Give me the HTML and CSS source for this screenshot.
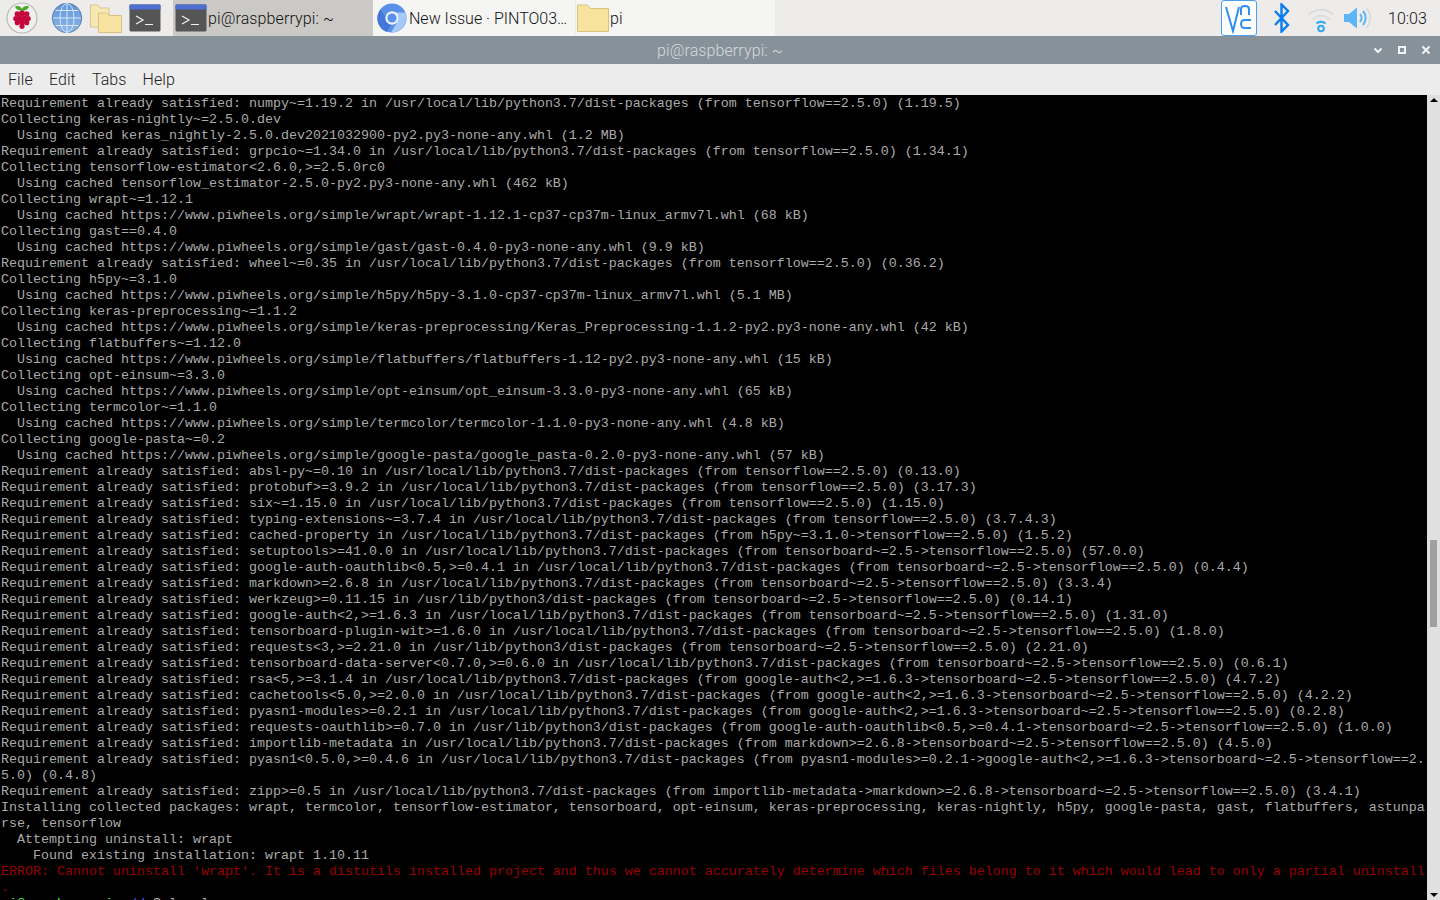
FILE: index.html
```
<!DOCTYPE html>
<html lang="en">
<head>
<meta charset="utf-8">
<title>pi@raspberrypi: ~</title>
<link rel="stylesheet" href="styles.css">
</head>
<body>
<div class="panel">
  <div class="launchers">
    <svg class="ico-menu" width="32" height="32" viewBox="0 0 32 32"><circle cx="16" cy="16" r="15" fill="#f0f0ee" stroke="#b9b9b7" stroke-width="1.2"/><path d="M15.500 9c-2-.3-5-1-6.500-4.500 3-.8 5.500-.5 7 2.500 1.500-3 4-3.300 7-2.500-1.500 3.500-4.500 4.200-6.500 4.500z" fill="#4ea72c"/><g fill="#c4083d" transform="translate(0 -1)"><circle cx="16" cy="12.500" r="3"/><circle cx="11.300" cy="13" r="2.700"/><circle cx="20.700" cy="13" r="2.700"/><circle cx="9.800" cy="17.500" r="2.600"/><circle cx="22.200" cy="17.500" r="2.600"/><circle cx="13.600" cy="17.300" r="2.800"/><circle cx="18.400" cy="17.300" r="2.800"/><circle cx="11.300" cy="21.700" r="2.600"/><circle cx="20.700" cy="21.700" r="2.600"/><circle cx="16" cy="21.500" r="2.800"/><circle cx="16" cy="25.300" r="2.600"/></g></svg>
    <svg class="ico-globe" width="32" height="32" viewBox="0 0 32 32"><defs><linearGradient id="gl" x1="0" y1="0" x2="0" y2="1"><stop offset="0" stop-color="#5f95dc"/><stop offset="1" stop-color="#8db6e8"/></linearGradient></defs><circle cx="16" cy="16" r="14.700" fill="url(#gl)" stroke="#5d7fa8" stroke-width="1"/><g fill="none" stroke="#d6e6f8" stroke-width="1"><ellipse cx="16" cy="16" rx="7" ry="14.500"/><path d="M16 1.500v29M2 16h28M4.500 8.500h23M4.500 23.500h23"/></g></svg>
    <svg class="ico-files" width="32" height="30" viewBox="0 0 32 30"><path d="M.500 2h7l2.500 3h9v19H.500z" fill="#f7e7b2" stroke="#d8c58c"/><path d="M8.500 10h8l2.500 2.500h12.500v17H8.500z" fill="#f8e4a0" stroke="#d9c27f"/></svg>
    <svg class="ico-term" width="32" height="28" viewBox="0 0 32 28"><rect x=".500" y=".500" width="31" height="27" rx="1.500" fill="#555"/><path d="M1 .500h30a.500.500 0 0 1 .500.500v4.500H.500V1a.500.500 0 0 1 .500-.500z" fill="#4e6fd2"/><path d="M7 12l7 4-7 4M16 20.500h8" fill="none" stroke="#f2f2f2" stroke-width="1.200"/></svg>
  </div>
  <div class="tasks">
    <div class="task task-active">
      <svg class="ico-term" width="32" height="28" viewBox="0 0 32 28"><rect x=".500" y=".500" width="31" height="27" rx="1.500" fill="#555"/><path d="M1 .500h30a.500.500 0 0 1 .500.500v4.500H.500V1a.500.500 0 0 1 .500-.500z" fill="#4e6fd2"/><path d="M7 12l7 4-7 4M16 20.500h8" fill="none" stroke="#f2f2f2" stroke-width="1.200"/></svg>
      <span>pi@raspberrypi: ~</span>
    </div>
    <div class="task task-chrome">
      <svg width="30" height="30" viewBox="0 0 30 30"><circle cx="15" cy="15" r="14.500" fill="#5b90e8"/><path d="M15 9.500h13a14.500 14.500 0 0 1-14 20l6-10a6 6 0 0 0-5-10z" fill="#a8c9f8"/><path d="M3.500 6.500L10 17a6 6 0 0 0 5 3.500L9.500 29A14.500 14.500 0 0 1 3.500 6.500z" fill="#4478d8"/><circle cx="15" cy="15" r="6.700" fill="#eef3fb"/><circle cx="15" cy="15" r="4.600" fill="#5b90e8"/></svg>
      <span>New Issue · PINTO03…</span>
    </div>
    <div class="task task-folder">
      <svg width="32" height="28" viewBox="0 0 32 28"><path d="M.500 1h10l3 3.500h18v23H.500z" fill="#f8e39c" stroke="#d9c27f"/></svg>
      <span>pi</span>
    </div>
  </div>
  <div class="tray">
    <div class="tray-vnc"><svg width="32" height="32" viewBox="0 0 32 32"><path d="M3 5l7 24 6-24" fill="none" stroke="#2f8ff0" stroke-width="2"/><path d="M18 13V7c0-2 1.500-3 4-3s4 1 4 3v6M28 18h-6c-2.500 0-4 1.500-4 4s1.500 4 4 4h6" fill="none" stroke="#2f8ff0" stroke-width="2"/></svg></div>
    <svg class="tray-bt" width="18" height="30" viewBox="0 0 18 30"><path d="M2 8l13 14-6.500 6.500V1.500L15 8 2 22" fill="none" stroke="#0a7df0" stroke-width="2.400"/></svg>
    <svg class="tray-wifi" width="28" height="30" viewBox="0 0 28 30"><path d="M1.500 12C8 5 20 5 26.500 12M5.500 16.500c5-5 12-5 17 0" fill="none" stroke="#dcdcdc" stroke-width="2"/><path d="M9.500 20.500c2.500-2.500 6.500-2.500 9 0" fill="none" stroke="#33a6f2" stroke-width="2"/><circle cx="14" cy="25.500" r="2.800" fill="none" stroke="#33a6f2" stroke-width="2"/></svg>
    <svg class="tray-vol" width="28" height="30" viewBox="0 0 28 30"><path d="M1 11h5l8-6.500v21L6 19H1z" fill="#5cb5f5"/><path d="M17 11c2 2.500 2 5.500 0 8" fill="none" stroke="#5cb5f5" stroke-width="2"/><path d="M20 8c3.500 4 3.500 10 0 14" fill="none" stroke="#5cb5f5" stroke-width="2"/><path d="M23.500 5c5 6 5 14 0 20" fill="none" stroke="#dcdcdc" stroke-width="2"/></svg>
    <div class="clock">10:03</div>
  </div>
</div>
<div class="titlebar">
  <div class="title">pi@raspberrypi: ~</div>
  <div class="win-btns">
    <svg width="10" height="10" viewBox="0 0 10 10"><path d="M1.500 3.500L5 7l3.500-3.500" fill="none" stroke="#f4f5f6" stroke-width="2"/></svg>
    <svg width="10" height="10" viewBox="0 0 10 10"><rect x="2" y="2" width="6" height="6" fill="none" stroke="#f4f5f6" stroke-width="2"/></svg>
    <svg width="10" height="10" viewBox="0 0 10 10"><path d="M1.500 1.500l7 7M8.500 1.500l-7 7" fill="none" stroke="#f4f5f6" stroke-width="2"/></svg>
  </div>
</div>
<div class="menubar"><span>File</span><span>Edit</span><span>Tabs</span><span>Help</span></div>
<div class="window-body">
<pre class="terminal">Requirement already satisfied: numpy~=1.19.2 in /usr/local/lib/python3.7/dist-packages (from tensorflow==2.5.0) (1.19.5)
Collecting keras-nightly~=2.5.0.dev
  Using cached keras_nightly-2.5.0.dev2021032900-py2.py3-none-any.whl (1.2 MB)
Requirement already satisfied: grpcio~=1.34.0 in /usr/local/lib/python3.7/dist-packages (from tensorflow==2.5.0) (1.34.1)
Collecting tensorflow-estimator&lt;2.6.0,&gt;=2.5.0rc0
  Using cached tensorflow_estimator-2.5.0-py2.py3-none-any.whl (462 kB)
Collecting wrapt~=1.12.1
  Using cached https://www.piwheels.org/simple/wrapt/wrapt-1.12.1-cp37-cp37m-linux_armv7l.whl (68 kB)
Collecting gast==0.4.0
  Using cached https://www.piwheels.org/simple/gast/gast-0.4.0-py3-none-any.whl (9.9 kB)
Requirement already satisfied: wheel~=0.35 in /usr/local/lib/python3.7/dist-packages (from tensorflow==2.5.0) (0.36.2)
Collecting h5py~=3.1.0
  Using cached https://www.piwheels.org/simple/h5py/h5py-3.1.0-cp37-cp37m-linux_armv7l.whl (5.1 MB)
Collecting keras-preprocessing~=1.1.2
  Using cached https://www.piwheels.org/simple/keras-preprocessing/Keras_Preprocessing-1.1.2-py2.py3-none-any.whl (42 kB)
Collecting flatbuffers~=1.12.0
  Using cached https://www.piwheels.org/simple/flatbuffers/flatbuffers-1.12-py2.py3-none-any.whl (15 kB)
Collecting opt-einsum~=3.3.0
  Using cached https://www.piwheels.org/simple/opt-einsum/opt_einsum-3.3.0-py3-none-any.whl (65 kB)
Collecting termcolor~=1.1.0
  Using cached https://www.piwheels.org/simple/termcolor/termcolor-1.1.0-py3-none-any.whl (4.8 kB)
Collecting google-pasta~=0.2
  Using cached https://www.piwheels.org/simple/google-pasta/google_pasta-0.2.0-py3-none-any.whl (57 kB)
Requirement already satisfied: absl-py~=0.10 in /usr/local/lib/python3.7/dist-packages (from tensorflow==2.5.0) (0.13.0)
Requirement already satisfied: protobuf&gt;=3.9.2 in /usr/local/lib/python3.7/dist-packages (from tensorflow==2.5.0) (3.17.3)
Requirement already satisfied: six~=1.15.0 in /usr/local/lib/python3.7/dist-packages (from tensorflow==2.5.0) (1.15.0)
Requirement already satisfied: typing-extensions~=3.7.4 in /usr/local/lib/python3.7/dist-packages (from tensorflow==2.5.0) (3.7.4.3)
Requirement already satisfied: cached-property in /usr/local/lib/python3.7/dist-packages (from h5py~=3.1.0-&gt;tensorflow==2.5.0) (1.5.2)
Requirement already satisfied: setuptools&gt;=41.0.0 in /usr/local/lib/python3.7/dist-packages (from tensorboard~=2.5-&gt;tensorflow==2.5.0) (57.0.0)
Requirement already satisfied: google-auth-oauthlib&lt;0.5,&gt;=0.4.1 in /usr/local/lib/python3.7/dist-packages (from tensorboard~=2.5-&gt;tensorflow==2.5.0) (0.4.4)
Requirement already satisfied: markdown&gt;=2.6.8 in /usr/local/lib/python3.7/dist-packages (from tensorboard~=2.5-&gt;tensorflow==2.5.0) (3.3.4)
Requirement already satisfied: werkzeug&gt;=0.11.15 in /usr/lib/python3/dist-packages (from tensorboard~=2.5-&gt;tensorflow==2.5.0) (0.14.1)
Requirement already satisfied: google-auth&lt;2,&gt;=1.6.3 in /usr/local/lib/python3.7/dist-packages (from tensorboard~=2.5-&gt;tensorflow==2.5.0) (1.31.0)
Requirement already satisfied: tensorboard-plugin-wit&gt;=1.6.0 in /usr/local/lib/python3.7/dist-packages (from tensorboard~=2.5-&gt;tensorflow==2.5.0) (1.8.0)
Requirement already satisfied: requests&lt;3,&gt;=2.21.0 in /usr/lib/python3/dist-packages (from tensorboard~=2.5-&gt;tensorflow==2.5.0) (2.21.0)
Requirement already satisfied: tensorboard-data-server&lt;0.7.0,&gt;=0.6.0 in /usr/local/lib/python3.7/dist-packages (from tensorboard~=2.5-&gt;tensorflow==2.5.0) (0.6.1)
Requirement already satisfied: rsa&lt;5,&gt;=3.1.4 in /usr/local/lib/python3.7/dist-packages (from google-auth&lt;2,&gt;=1.6.3-&gt;tensorboard~=2.5-&gt;tensorflow==2.5.0) (4.7.2)
Requirement already satisfied: cachetools&lt;5.0,&gt;=2.0.0 in /usr/local/lib/python3.7/dist-packages (from google-auth&lt;2,&gt;=1.6.3-&gt;tensorboard~=2.5-&gt;tensorflow==2.5.0) (4.2.2)
Requirement already satisfied: pyasn1-modules&gt;=0.2.1 in /usr/local/lib/python3.7/dist-packages (from google-auth&lt;2,&gt;=1.6.3-&gt;tensorboard~=2.5-&gt;tensorflow==2.5.0) (0.2.8)
Requirement already satisfied: requests-oauthlib&gt;=0.7.0 in /usr/lib/python3/dist-packages (from google-auth-oauthlib&lt;0.5,&gt;=0.4.1-&gt;tensorboard~=2.5-&gt;tensorflow==2.5.0) (1.0.0)
Requirement already satisfied: importlib-metadata in /usr/local/lib/python3.7/dist-packages (from markdown&gt;=2.6.8-&gt;tensorboard~=2.5-&gt;tensorflow==2.5.0) (4.5.0)
Requirement already satisfied: pyasn1&lt;0.5.0,&gt;=0.4.6 in /usr/local/lib/python3.7/dist-packages (from pyasn1-modules&gt;=0.2.1-&gt;google-auth&lt;2,&gt;=1.6.3-&gt;tensorboard~=2.5-&gt;tensorflow==2.
5.0) (0.4.8)
Requirement already satisfied: zipp&gt;=0.5 in /usr/local/lib/python3.7/dist-packages (from importlib-metadata-&gt;markdown&gt;=2.6.8-&gt;tensorboard~=2.5-&gt;tensorflow==2.5.0) (3.4.1)
Installing collected packages: wrapt, termcolor, tensorflow-estimator, tensorboard, opt-einsum, keras-preprocessing, keras-nightly, h5py, google-pasta, gast, flatbuffers, astunpa
rse, tensorflow
  Attempting uninstall: wrapt
    Found existing installation: wrapt 1.10.11
<span class="t-red">ERROR: Cannot uninstall 'wrapt'. It is a distutils installed project and thus we cannot accurately determine which files belong to it which would lead to only a partial uninstall
.</span>
<span class="t-green">pi@raspberrypi</span>:<span class="t-blue">~/d</span> $ ls -l</pre>
<div class="scrollbar">
  <div class="sb-up"></div>
  <div class="sb-track"><div class="sb-thumb"></div></div>
  <div class="sb-down"></div>
</div>
</div>
</body>
</html>
```

FILE: styles.css
```
* { box-sizing: border-box; }
html, body { margin: 0; padding: 0; }
body {
  width: 1440px;
  height: 900px;
  overflow: hidden;
  display: flex;
  flex-direction: column;
  font-family: Roboto, "Liberation Sans", sans-serif;
  font-weight: 300;
  background: #000;
}
svg { display: block; flex: none; }
.panel {
  height: 36px;
  flex: none;
  display: flex;
  align-items: center;
  background: #edecea;
  color: #111;
  font-size: 16px;
}
.launchers {
  display: flex;
  align-items: center;
  padding-left: 6px;
  width: 173px;
  flex: none;
}
.ico-globe { margin-left: 13px; }
.ico-files { margin-left: 7px; }
.ico-term { margin-left: 7px; }
.tasks { display: flex; height: 36px; }
.task {
  display: flex;
  align-items: center;
  height: 36px;
  overflow: hidden;
  white-space: nowrap;
  background: #f5f5f3;
}
.task-active { width: 200px; padding-left: 2px; background: #cbc9c5; }
.task-active .ico-term { margin-left: 0; }
.task-active span { margin-left: 1px; letter-spacing: 0.12px; }
.task-chrome { width: 202px; padding-left: 4px; }
.task-chrome span { margin-left: 2px; }
.task-folder { width: 200px; padding-left: 1px; border-left: 1px solid #ecebe9; }
.task-folder span { margin-left: 1px; }
.tray {
  margin-left: auto;
  display: flex;
  align-items: center;
  height: 36px;
  padding-right: 13px;
}
.tray-vnc {
  width: 36px;
  height: 36px;
  background: #fff;
  border: 1px solid #4a9ff0;
  border-radius: 3px;
  display: flex;
  align-items: center;
  justify-content: center;
}
.tray-bt { margin-left: 16px; }
.tray-wifi { margin-left: 16px; }
.tray-vol { margin-left: 8px; }
.clock { margin-left: 17px; width: 39px; }
.titlebar {
  height: 28px;
  flex: none;
  display: flex;
  align-items: center;
  background: #87919a;
  position: relative;
}
.title {
  flex: 1;
  text-align: center;
  font-size: 16px;
  letter-spacing: 0.1px;
  color: #d6dadd;
}
.win-btns {
  position: absolute;
  right: 9px;
  top: 9px;
  display: flex;
  gap: 14px;
}
.menubar {
  height: 31px;
  flex: none;
  display: flex;
  align-items: center;
  gap: 16px;
  padding-left: 8px;
  background: #edecec;
  color: #222;
  font-size: 16px;
  letter-spacing: 0.1px;
}
.window-body {
  flex: 1;
  min-height: 0;
  display: flex;
}
.terminal {
  flex: 1;
  margin: 0;
  padding: 1px 0 0 1px;
  overflow: hidden;
  background: #000;
  color: #aaa;
  font-family: "Liberation Mono", monospace;
  font-size: 13.333px;
  font-weight: 400;
  line-height: 16px;
  white-space: pre;
}
.t-red { color: #9a0000; }
.t-green { color: #55ff55; }
.t-blue { color: #5555ff; }
.scrollbar {
  width: 13px;
  flex: none;
  display: flex;
  flex-direction: column;
  background: #e0e0e0;
  align-items: center;
}
.sb-up, .sb-down {
  width: 0;
  height: 0;
  border-left: 4px solid transparent;
  border-right: 4px solid transparent;
  flex: none;
}
.sb-up { border-bottom: 4px solid #000; margin-top: 3px; }
.sb-down { border-top: 4px solid #000; margin-bottom: 3px; }
.sb-track { flex: 1; width: 7px; padding-top: 438px; }
.sb-thumb { height: 87px; background: #a0a0a0; }
```
